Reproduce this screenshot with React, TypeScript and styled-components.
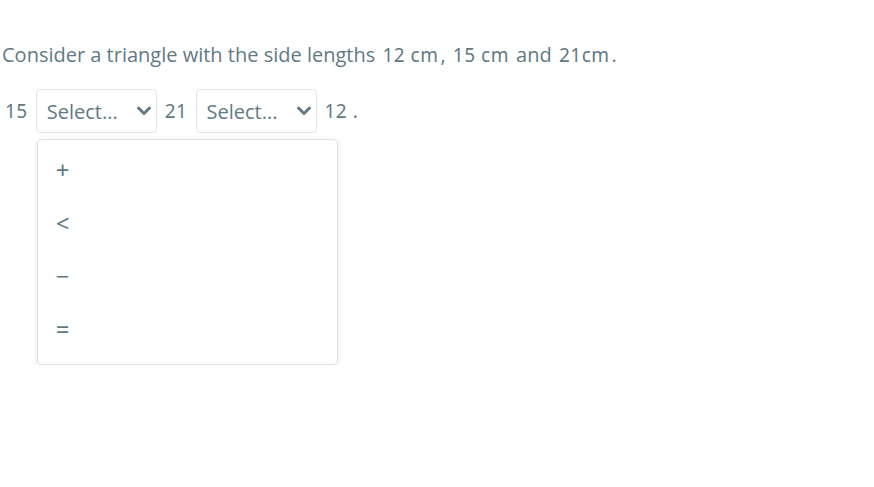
import React from "react";
import styled, { createGlobalStyle } from "styled-components";

const Global = createGlobalStyle`
  html, body { margin: 0; padding: 0; background: #ffffff; }
  body { font-family: "Open Sans", sans-serif; color: #5f7a85; }
`;

const Page = styled.div`
  padding: 42px 0 0 2px;
`;

const Sentence = styled.p`
  margin: 0;
  font-size: 20px;
  line-height: 26px;
  color: #5f7a85;
`;

const Num = styled.span`
  font-family: "Noto Sans", sans-serif;
  font-size: 19px;
  letter-spacing: 0.5px;
  margin: 0 2px;
`;

const Row = styled.div`
  display: flex;
  align-items: flex-start;
  gap: 8px;
  margin-top: 21px;
  padding-left: 3px;
`;

const Term = styled.span`
  height: 44px;
  display: flex;
  align-items: center;
  font-family: "Noto Sans", sans-serif;
  font-size: 19px;
  color: #5f7a85;
  letter-spacing: 0.5px;
`;

const SelectWrap = styled.div`
  width: 121px;
  flex: none;
  display: flex;
  flex-direction: column;
  align-items: flex-start;
  gap: 6px;
`;

const SelectBox = styled.div`
  box-sizing: border-box;
  width: 121px;
  height: 44px;
  border: 1px solid #e3e7e9;
  border-radius: 4px;
  display: flex;
  align-items: center;
  justify-content: space-between;
  padding: 0 4px 0 10px;
  font-size: 20px;
  color: #5f7a85;
  background: #fff;
`;

const Menu = styled.div`
  margin-left: 1px;
  width: 301px;
  flex: none;
  box-sizing: border-box;
  padding: 3px 0 9px;
  background: #fff;
  border: 1px solid #dfe3e5;
  border-radius: 5px;
  box-shadow: 0 2px 6px rgba(0, 0, 0, 0.1);
  display: flex;
  flex-direction: column;
`;

const Item = styled.div`
  height: 53px;
  display: flex;
  align-items: center;
  padding-left: 18px;
  font-family: "Noto Sans", sans-serif;
  font-size: 24px;
  color: #5f7a85;
`;

const Chevron = () => (
  <svg width="16" height="12" viewBox="0 0 16 12">
    <path d="M2.5 3 L8 8.5 L13.5 3" fill="none" stroke="#5f7a85" strokeWidth="3" strokeLinecap="round" strokeLinejoin="round" />
  </svg>
);

export default function App() {
  return (
    <>
      <Global />
      <Page>
        <Sentence>
          Consider a triangle with the side lengths <Num>12 cm</Num>, <Num>15 cm</Num> and <Num>21cm</Num>.
        </Sentence>
        <Row>
          <Term>15</Term>
          <SelectWrap>
            <SelectBox>
              <span>Select...</span>
              <Chevron />
            </SelectBox>
            <Menu>
              <Item>+</Item>
              <Item>&lt;</Item>
              <Item>−</Item>
              <Item>=</Item>
            </Menu>
          </SelectWrap>
          <Term>21</Term>
          <SelectWrap>
            <SelectBox>
              <span>Select...</span>
              <Chevron />
            </SelectBox>
          </SelectWrap>
          <Term>12 .</Term>
        </Row>
      </Page>
    </>
  );
}
